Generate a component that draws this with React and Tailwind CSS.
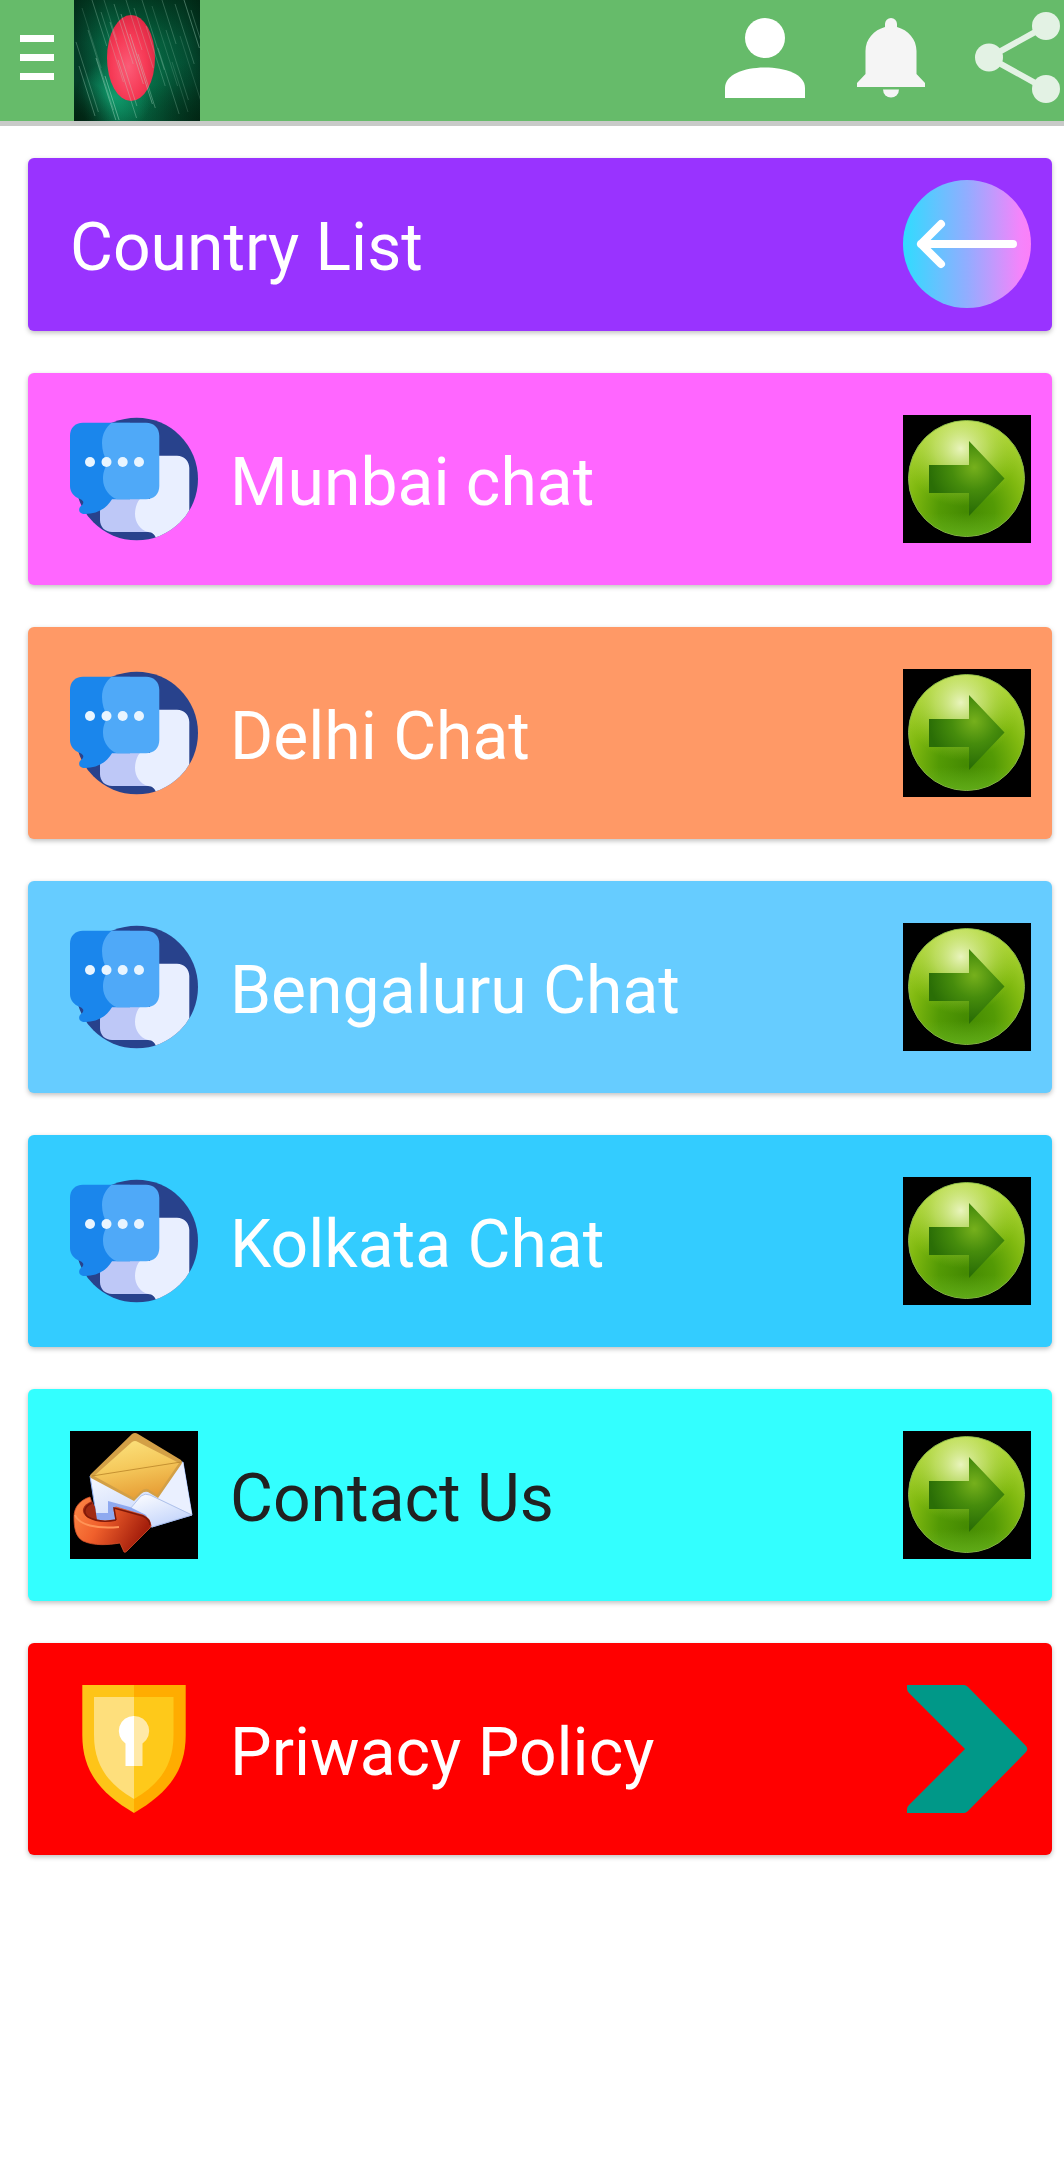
import React, { useId } from "react";

// Rain streaks over the flag: x, y, length, opacity
const STREAKS = [
  [2, 42, 70, 0.35], [8, 8, 60, 0.2], [5, 66, 50, 0.4], [14, 30, 80, 0.3],
  [18, 0, 46, 0.35], [22, 58, 62, 0.5], [27, 12, 70, 0.3], [31, 76, 44, 0.55],
  [30, 0, 40, 0.25], [36, 22, 84, 0.4], [40, 4, 60, 0.35], [44, 60, 58, 0.4],
  [47, 14, 70, 0.45], [52, 0, 50, 0.3], [56, 34, 70, 0.5], [60, 8, 60, 0.3],
  [64, 54, 54, 0.4], [68, 0, 70, 0.3], [72, 26, 60, 0.3], [78, 6, 80, 0.22],
  [84, 48, 66, 0.3], [88, 0, 44, 0.3], [92, 30, 70, 0.25], [98, 62, 50, 0.2],
  [101, 4, 60, 0.3], [106, 36, 70, 0.2], [110, 0, 48, 0.45], [117, 10, 60, 0.3],
];

const FlagImage = () => {
  const id = useId();
  return (
    <svg viewBox="0 0 126 121" className="h-[121px] w-[126px] shrink-0" role="img" aria-label="Flag">
      <defs>
        <linearGradient id={`${id}-g`} x1="0" y1="0.1" x2="1" y2="0">
          <stop offset="0" stopColor="#033d28" />
          <stop offset="0.28" stopColor="#087a52" />
          <stop offset="0.6" stopColor="#066a45" />
          <stop offset="0.85" stopColor="#045034" />
          <stop offset="1" stopColor="#02331f" />
        </linearGradient>
        <linearGradient id={`${id}-s`} x1="0" y1="0" x2="0" y2="1">
          <stop offset="0" stopColor="#00200f" stopOpacity="0.65" />
          <stop offset="0.35" stopColor="#00200f" stopOpacity="0.1" />
          <stop offset="0.7" stopColor="#00200f" stopOpacity="0" />
          <stop offset="1" stopColor="#00200f" stopOpacity="0.25" />
        </linearGradient>
        <radialGradient id={`${id}-l`} cx="0.32" cy="0.8" r="0.3">
          <stop offset="0" stopColor="#12a574" stopOpacity="0.8" />
          <stop offset="1" stopColor="#12a574" stopOpacity="0" />
        </radialGradient>
        <radialGradient id={`${id}-d`} cx="1" cy="1" r="0.5">
          <stop offset="0" stopColor="#01200f" stopOpacity="0.8" />
          <stop offset="1" stopColor="#01200f" stopOpacity="0" />
        </radialGradient>
        <radialGradient id={`${id}-c`} cx="0" cy="1" r="0.35">
          <stop offset="0" stopColor="#01200f" stopOpacity="0.9" />
          <stop offset="1" stopColor="#01200f" stopOpacity="0" />
        </radialGradient>
        <radialGradient id={`${id}-r`} cx="0.45" cy="0.6" r="0.6">
          <stop offset="0" stopColor="#fb5c77" />
          <stop offset="0.6" stopColor="#f63a56" />
          <stop offset="1" stopColor="#e02a45" />
        </radialGradient>
      </defs>
      <rect width="126" height="121" fill={`url(#${id}-g)`} />
      <rect width="126" height="121" fill={`url(#${id}-s)`} />
      <rect width="126" height="121" fill={`url(#${id}-l)`} />
      <rect width="126" height="121" fill={`url(#${id}-d)`} />
      <rect width="126" height="121" fill={`url(#${id}-c)`} />
      <ellipse cx="57" cy="58" rx="24" ry="43" fill={`url(#${id}-r)`} />
      {STREAKS.map(([x, y, len, o]) => (
        <path
          key={`${x}-${y}`}
          d={`M${x} ${y}l${len * 0.32} ${len}`}
          stroke="#b9e8d2"
          strokeWidth="0.8"
          opacity={o}
        />
      ))}
    </svg>
  );
};

const MenuIcon = () => (
  <svg viewBox="0 0 34 45" className="h-[45px] w-[34px]" fill="#fff">
    <rect width="34" height="7" />
    <rect y="19" width="34" height="7" />
    <rect y="38" width="34" height="7" />
  </svg>
);

const PersonIcon = () => (
  <svg viewBox="0 0 80 80" className="size-20" fill="#fff">
    <circle cx="40" cy="20" r="20" />
    <path d="M0 80V70C0 56 20 49.500 40 49.500S80 56 80 70V80Z" />
  </svg>
);

const BellIcon = () => (
  <svg viewBox="0 0 70 80" className="h-20 w-[70px]" fill="#f5f5f5">
    <path d="M30 9V6a6 6 0 0 1 12 0v3C53 12 61.500 21 61.500 33V56L70 65V69H2V65L10.500 56V33C10.500 21 19 12 30 9Z" />
    <path d="M28 71.500H44A8 8 0 0 1 28 71.500Z" />
  </svg>
);

const ShareIcon = () => (
  <svg viewBox="0 0 85 91" className="h-[91px] w-[85px]" fill="#e3f2e4">
    <path d="M71 14L14 45.500L71 77" fill="none" stroke="#e3f2e4" strokeWidth="6" />
    <circle cx="71" cy="14" r="14" />
    <circle cx="14" cy="45.500" r="14" />
    <circle cx="71" cy="77" r="14" />
  </svg>
);

const BackIcon = () => {
  const id = useId();
  return (
    <svg viewBox="0 0 128 128" className="size-32 shrink-0">
      <defs>
        <linearGradient id={id}>
          <stop offset="0" stopColor="#2fdcff" />
          <stop offset="0.5" stopColor="#92adff" />
          <stop offset="0.92" stopColor="#f584fb" />
          <stop offset="1" stopColor="#fb80f8" />
        </linearGradient>
      </defs>
      <circle cx="64" cy="64" r="64" fill={`url(#${id})`} />
      <path d="M110 64H18M38 44L18 64L38 84" fill="none" stroke="#fff" strokeWidth="8" strokeLinecap="round" strokeLinejoin="round" />
    </svg>
  );
};

const ChatIcon = () => {
  const id = useId();
  return (
    <svg viewBox="0 0 128 128" className="size-32 shrink-0">
      <clipPath id={id}>
        <circle cx="66.700" cy="64" r="61.300" />
      </clipPath>
      <circle cx="66.700" cy="64" r="61.300" fill="#28428c" />
      <g clipPath={`url(#${id})`}>
        <path d="M42 84H80V117H42C35 117 30 112 30 105V96C30 89 35 84 42 84Z" fill="#bec8f7" />
        <path d="M80 40.700H107C114 40.700 119.300 46 119.300 53V128H88C86 121 83 117 78 117C70 115 65 107 65 99C65 93 67 87 70 84H80Z" fill="#e9efff" />
      </g>
      <path d="M13 7.700H60V84.300H42C36 94 27 99 15 99C9 99 7.500 94 11 91C14 88.500 14.500 86 10 84C4 82 0 77 0 71V21C0 13 5 7.700 13 7.700Z" fill="#1a86ec" />
      <path d="M41.700 7.700H76C84 7.700 89.300 13 89.300 21V71C89.300 79 84 84.300 76 84.300H47C40 82 33 74 33 64C33 57 35 52 38 48C34 42 32 35 32 28C32 19 36 12 41.700 7.700Z" fill="#4fa9f8" />
      <g fill="#e9f5ff">
        <circle cx="20" cy="47" r="5" />
        <circle cx="36.500" cy="47" r="5" />
        <circle cx="52.700" cy="47" r="5" />
        <circle cx="69" cy="47" r="5" />
      </g>
    </svg>
  );
};

const GoIcon = () => {
  const id = useId();
  return (
    <svg viewBox="0 0 128 128" className="size-32 shrink-0">
      <defs>
        <radialGradient id={`${id}-b`} cx="0.5" cy="0.78" r="0.8">
          <stop offset="0" stopColor="#448a02" />
          <stop offset="0.3" stopColor="#539a05" />
          <stop offset="0.6" stopColor="#80b910" />
          <stop offset="1" stopColor="#b5da3c" />
        </radialGradient>
        <radialGradient id={`${id}-h`} cx="0.45" cy="0.24" r="0.5">
          <stop offset="0" stopColor="#eef7c6" stopOpacity="0.95" />
          <stop offset="0.45" stopColor="#d4ea82" stopOpacity="0.6" />
          <stop offset="1" stopColor="#a5d22a" stopOpacity="0" />
        </radialGradient>
        <linearGradient id={`${id}-u`} x1="0" y1="0" x2="0" y2="1">
          <stop offset="0.8" stopColor="#62ae1c" stopOpacity="0" />
          <stop offset="1" stopColor="#62ae1c" stopOpacity="0.8" />
        </linearGradient>
        <radialGradient id={`${id}-a`} cx="0.6" cy="0.35" r="0.6">
          <stop offset="0" stopColor="#76b01c" />
          <stop offset="0.5" stopColor="#468c0c" />
          <stop offset="1" stopColor="#2a6e06" />
        </radialGradient>
      </defs>
      <rect width="128" height="128" fill="#000" />
      <circle cx="63.500" cy="63.500" r="58" fill={`url(#${id}-b)`} stroke="#86b548" />
      <circle cx="63.500" cy="63.500" r="57.500" fill={`url(#${id}-h)`} />
      <circle cx="63.500" cy="63.500" r="57.500" fill={`url(#${id}-u)`} />
      <path d="M26 50H66V26L101.500 63.500L66 101V78H26Z" fill={`url(#${id}-a)`} />
    </svg>
  );
};

const MailIcon = () => {
  const id = useId();
  return (
    <svg viewBox="0 0 128 128" className="size-32 shrink-0">
      <defs>
        <linearGradient id={`${id}-y`} x1="0.3" y1="0" x2="0.6" y2="1">
          <stop offset="0" stopColor="#fbe07a" />
          <stop offset="0.45" stopColor="#f5c95c" />
          <stop offset="1" stopColor="#e69c34" />
        </linearGradient>
        <linearGradient id={`${id}-w`} x1="0" y1="0" x2="0.6" y2="1">
          <stop offset="0" stopColor="#fff" />
          <stop offset="1" stopColor="#c3d4fb" />
        </linearGradient>
        <linearGradient id={`${id}-o`} x1="0" y1="0" x2="1" y2="0.4">
          <stop offset="0" stopColor="#ff8a48" />
          <stop offset="0.45" stopColor="#f0602c" />
          <stop offset="1" stopColor="#a51f0c" />
        </linearGradient>
      </defs>
      <rect width="128" height="128" fill="#000" />
      <path d="M20 45L113 31L122 84L82 96L27 90Z" fill={`url(#${id}-w)`} stroke="#8fb0f2" strokeWidth="1" />
      <path d="M113 31L122 84L88 67Z" fill="#eaf0ff" />
      <path d="M62 3Q65 1 68 3L111 29Q113 31 111.500 33L88 67L78 61Q74 60 71 63L64 70L21 47Q19 45 21 43Z" fill="#d3a046" />
      <path d="M62 11Q65 9 68 11L109 32L87 64L78 58Q74 57 70 61L64 67L24 45Z" fill={`url(#${id}-y)`} />
      <path d="M22 45L111 31" stroke="#b98427" strokeWidth="0.8" />
      <path d="M60 78L71 65Q75 62 80 64L122 84L82 96L75 84Z" fill={`url(#${id}-w)`} stroke="#a5b9e4" strokeWidth="0.8" />
      <path d="M26 82H38V70L60 76L76 84L78 88L46 80V89H27Z" fill="#8ea9f0" />
      <path d="M20 66C10 69 4 76 4 86C4 98 6 106 13 110C24 115 38 114 50 112L54 121Q55 122 57 120L80 97Q82 95 80 91C79 87 76 86 73 84L46 76Q44 76 44 79L46 89C36 91 25 90 18 86C11 81 15 75 22 72Z" fill={`url(#${id}-o)`} stroke="#d4502a" strokeWidth="0.8" />
      <path d="M22 70C12 74 10 81 17 86L27 89L25 76Z" fill="#a22a12" />
      <path d="M5 84C9 94 26 98 49 96" fill="none" stroke="#ff9457" strokeWidth="2" />
      <path d="M46 89C36 91 25 90 18 86C12 81 15 75 22 72M46 89L44 77L73 85C77 87 80 89 80 94" fill="none" stroke="#7e1808" strokeWidth="1.500" />
    </svg>
  );
};

const ShieldIcon = () => (
  <svg viewBox="0 0 128 128" className="size-32 shrink-0">
    <path d="M12.300 0H64V128C32 109 12.300 88 12.300 50Z" fill="#fec418" />
    <path d="M64 0H115.700V50C115.700 88 96 109 64 128Z" fill="#ffac00" />
    <path d="M24 12H64V114C38 99 24 80 24 50Z" fill="#fedf7c" />
    <path d="M64 12H103.500V50C103.500 80 90 99 64 114Z" fill="#fec91a" />
    <path d="M64 31A15 15 0 0 0 55.500 58.500V81H64Z" fill="#fff" />
    <path d="M64 31A15 15 0 0 1 72.500 58.500V81H64Z" fill="#ffe9a8" />
  </svg>
);

const ChevronIcon = () => (
  <svg viewBox="0 0 128 128" className="size-32 shrink-0">
    <path d="M4 0H61Q63 0 65 2L123 61Q125.500 64 123 67L65 126Q63 128 61 128H4V124Q4 122 6 120L62 64L6 8Q4 6 4 4Z" fill="#009888" />
  </svg>
);

const rows = [
  { label: "Munbai chat", href: "#mumbai", color: "bg-[#ff66ff] text-white", Icon: ChatIcon, Action: GoIcon },
  { label: "Delhi Chat", href: "#delhi", color: "bg-[#ff9966] text-white", Icon: ChatIcon, Action: GoIcon },
  { label: "Bengaluru Chat", href: "#bengaluru", color: "bg-[#66ccff] text-white", Icon: ChatIcon, Action: GoIcon },
  { label: "Kolkata Chat", href: "#kolkata", color: "bg-[#33ccff] text-white", Icon: ChatIcon, Action: GoIcon },
  { label: "Contact Us", href: "#contact", color: "bg-[#33ffff] text-[#212121]", Icon: MailIcon, Action: GoIcon },
  { label: "Priwacy Policy", href: "#privacy", color: "bg-[#ff0000] text-white", Icon: ShieldIcon, Action: ChevronIcon },
];

const App = () => {
  return (
    <div className="min-h-screen bg-white font-[Roboto,sans-serif]">
      {/* App bar */}
      <header className="flex items-center justify-between border-b-[5px] border-[#c8cac8] bg-[#66bb6a]">
        <div className="flex items-center">
          <button type="button" aria-label="Menu" className="px-5 pb-1.5">
            <MenuIcon />
          </button>
          <FlagImage />
        </div>
        <div className="flex items-center gap-[50px] pr-1 pb-1.5">
          <button type="button" aria-label="Profile">
            <PersonIcon />
          </button>
          <button type="button" aria-label="Notifications">
            <BellIcon />
          </button>
          <button type="button" aria-label="Share">
            <ShareIcon />
          </button>
        </div>
      </header>

      <main className="flex flex-col gap-[42px] pt-8 pr-3 pb-8 pl-7 text-[66px] leading-[76px]">
        <div className="flex items-center justify-between rounded-md bg-[#9933ff] pt-[22px] pr-[21px] pb-[23px] pl-[42px] text-white shadow-[0_2px_5px_rgba(0,0,0,0.25)]">
          <h1 className="pt-2">Country List</h1>
          <button type="button" aria-label="Back">
            <BackIcon />
          </button>
        </div>

        {rows.map(({ label, href, color, Icon, Action }) => (
          <a
            key={label}
            href={href}
            className={`flex items-center rounded-md py-[42px] pr-[21px] pl-[42px] shadow-[0_2px_5px_rgba(0,0,0,0.25)] ${color}`}
          >
            <Icon />
            <span className="grow pt-2 pl-8">{label}</span>
            <Action />
          </a>
        ))}
      </main>
    </div>
  );
};

export default App;
